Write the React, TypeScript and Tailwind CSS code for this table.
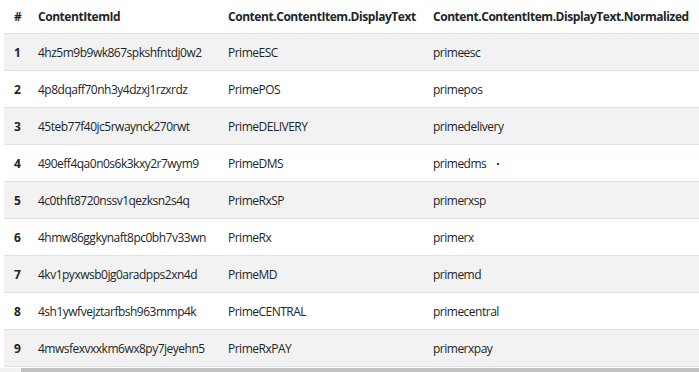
import React from "react";

const rows = [
  ["4hz5m9b9wk867spkshfntdj0w2", "PrimeESC", "primeesc"],
  ["4p8dqaff70nh3y4dzxj1rzxrdz", "PrimePOS", "primepos"],
  ["45teb77f40jc5rwaynck270rwt", "PrimeDELIVERY", "primedelivery"],
  ["490eff4qa0n0s6k3kxy2r7wym9", "PrimeDMS", "primedms"],
  ["4c0thft8720nssv1qezksn2s4q", "PrimeRxSP", "primerxsp"],
  ["4hmw86ggkynaft8pc0bh7v33wn", "PrimeRx", "primerx"],
  ["4kv1pyxwsb0jg0aradpps2xn4d", "PrimeMD", "primemd"],
  ["4sh1ywfvejztarfbsh963mmp4k", "PrimeCENTRAL", "primecentral"],
  ["4mwsfexvxxkm6wx8py7jeyehn5", "PrimeRxPAY", "primerxpay"],
];

export default function App() {
  return (
    <div
      className="relative w-[699px] h-[372px] overflow-hidden bg-white text-[#212529] text-[12px] tracking-[-0.5px]"
      style={{ fontFamily: '"Open Sans", sans-serif' }}
    >
      <div className="pl-[4px]">
        <div className="flex h-[34px] pt-[1px] items-center font-bold tracking-[-0.45px] border-b border-[#dee2e6] whitespace-nowrap">
          <div className="w-[24px] shrink-0 pl-[10px]">#</div>
          <div className="w-[190px] shrink-0 pl-[10px]">ContentItemId</div>
          <div className="w-[205px] shrink-0 pl-[10px]">Content.ContentItem.DisplayText</div>
          <div className="shrink-0 pl-[10px]">Content.ContentItem.DisplayText.Normalized</div>
        </div>
        {rows.map((r, i) => (
          <div
            key={i}
            className={`flex h-[37px] pt-[2px] items-center border-b border-[#dee2e6] whitespace-nowrap ${
              i % 2 === 0 ? "bg-[#f2f2f2]" : "bg-white"
            }`}
          >
            <div className="w-[24px] shrink-0 pl-[10px] font-bold">{i + 1}</div>
            <div className="w-[190px] shrink-0 pl-[10px]">{r[0]}</div>
            <div className="w-[205px] shrink-0 pl-[10px]">{r[1]}</div>
            <div className="shrink-0 pl-[10px] flex items-center">
              {r[2]}
              {i === 3 && <span className="ml-[11px] w-[2px] h-[2px] bg-[#2020d0] inline-block" />}
            </div>
          </div>
        ))}
      </div>
      <div className="absolute left-0 right-0 bottom-0 h-[4px] bg-[#f1f1f1]">
        <div className="absolute left-[21px] right-0 top-0 bottom-0 bg-[#c1c1c1]" />
      </div>
    </div>
  );
}
